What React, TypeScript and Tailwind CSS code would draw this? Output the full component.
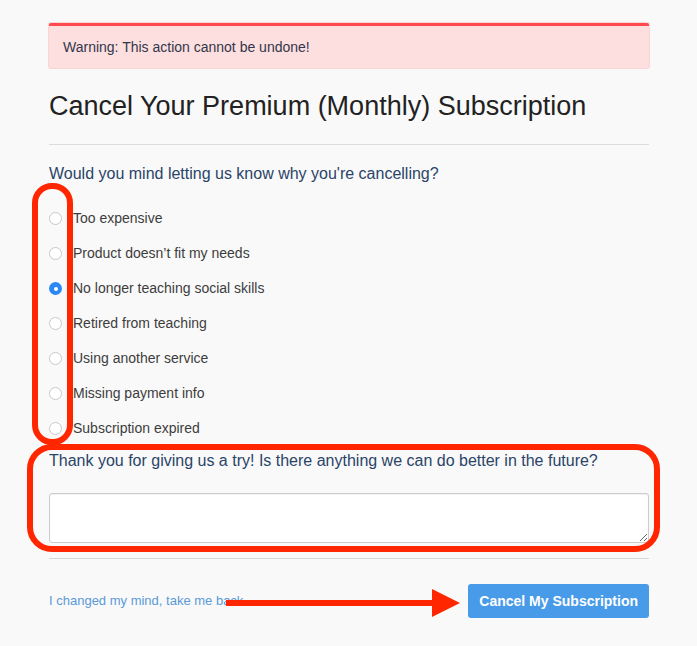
import React, { useState } from 'react';

const reasons = [
  'Too expensive',
  'Product doesn\u2019t fit my needs',
  'No longer teaching social skills',
  'Retired from teaching',
  'Using another service',
  'Missing payment info',
  'Subscription expired',
];

const Radio: React.FC<{ checked: boolean }> = ({ checked }) =>
  checked ? (
    <span className="w-[13px] h-[13px] rounded-full bg-[#2c87f5] flex items-center justify-center shrink-0">
      <span className="w-[4px] h-[4px] rounded-full bg-white" />
    </span>
  ) : (
    <span className="w-[13px] h-[13px] rounded-full border border-[#c9c9c9] bg-white shrink-0" />
  );

export default function App() {
  const [reason, setReason] = useState(2);

  return (
    <div className="relative min-h-screen bg-[#f9f9f9] pl-[49px] pt-[23px] font-['Liberation_Sans',Arial,sans-serif]">
      <div className="w-[600px]">
        {/* alert */}
        <div className="border-t-[3px] border-[#ff4a4f] bg-[#fddfe0] rounded-[2px] px-[14px] py-[11px] text-[14px] leading-[20px] text-[#33364a] shadow-[0_0_0_1px_#fbd4d6]">
          Warning: This action cannot be undone!
        </div>

        <h1 className="mt-[22px] text-[27px] leading-[32px] text-[#222]">
          Cancel Your Premium (Monthly) Subscription
        </h1>
        <hr className="mt-[22px] border-t border-[#dcdcdc]" />

        <p className="mt-[18px] text-[16px] leading-[22px] text-[#2a4468]">
          Would you mind letting us know why you're cancelling?
        </p>

        <div className="mt-[16px] flex flex-col">
          {reasons.map((r, i) => (
            <label
              key={r}
              className="h-[35px] flex items-center cursor-pointer"
              onClick={() => setReason(i)}
            >
              <span className="w-[24px] flex justify-start">
                <Radio checked={reason === i} />
              </span>
              <span className="text-[14px] text-[#3d3d3d]">{r}</span>
            </label>
          ))}
        </div>

        <p className="mt-[4px] text-[16px] leading-[22px] text-[#2a4468]">
          Thank you for giving us a try! Is there anything we can do better in the future?
        </p>

        <textarea className="mt-[21px] block w-full h-[50px] bg-white border border-[#cccccc] rounded-[3px] shadow-[inset_0_1px_1px_rgba(0,0,0,0.06)] outline-none resize-y" />

        <hr className="mt-[15px] border-t border-[#d6d6d6]" />

        <div className="mt-[25px] flex items-center justify-between">
          <a href="#" className="text-[13px] text-[#5b9ad8]">
            I changed my mind, take me back
          </a>
          <button className="h-[34px] px-[11px] rounded-[3px] bg-[#489be8] text-white text-[14px] font-bold">
            Cancel My Subscription
          </button>
        </div>
      </div>

      {/* red annotations */}
      <div className="absolute left-[32px] top-[183px] w-[41px] h-[262px] border-[6px] border-[#ff2600] rounded-[20px] pointer-events-none" />
      <div className="absolute left-[27px] top-[444px] w-[633px] h-[108px] border-[6px] border-[#ff2600] rounded-[25px] pointer-events-none" />
      <svg
        className="absolute left-0 top-0 pointer-events-none"
        width="697"
        height="646"
        viewBox="0 0 697 646"
      >
        <rect x="226" y="600" width="208" height="6" fill="#ff2600" />
        <polygon points="432,589 460,603 432,617" fill="#ff2600" />
      </svg>
    </div>
  );
}
